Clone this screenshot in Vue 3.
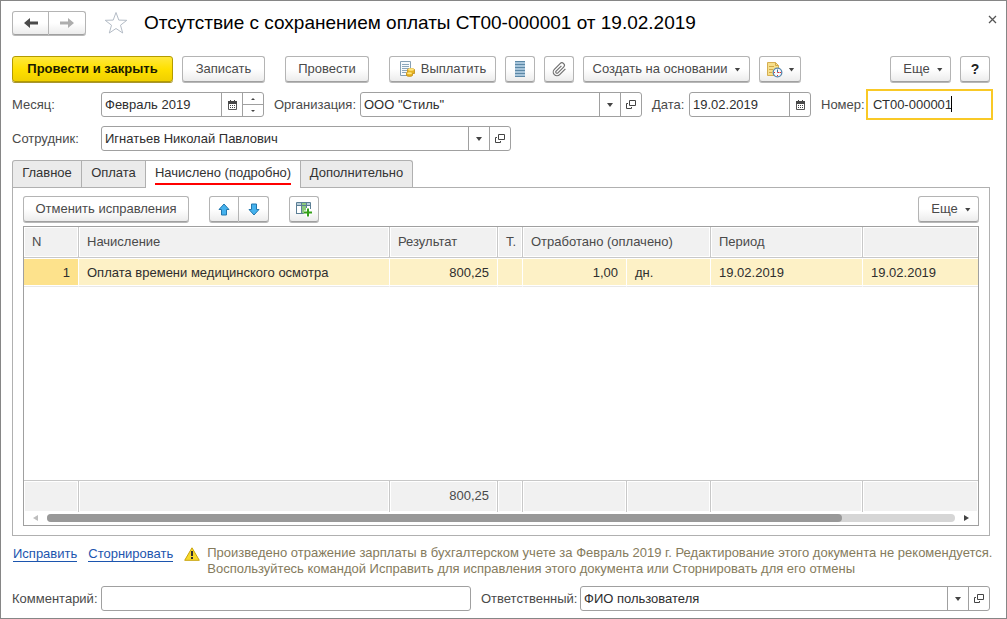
<script setup>
import { ref } from 'vue'

const month = ref('Февраль 2019')
const organization = ref('ООО "Стиль"')
const date = ref('19.02.2019')
const number = ref('СТ00-000001')
const employee = ref('Игнатьев Николай Павлович')
const comment = ref('')
const responsible = ref('ФИО пользователя')
const tabs = [
  { title: 'Главное', size: 'first' },
  { title: 'Оплата', size: 'short' },
  { title: 'Начислено (подробно)', size: 'long' },
  { title: 'Дополнительно', size: 'medium' },
]
const active = ref(2)
const rows = [
  { n: 1, name: 'Оплата времени медицинского осмотра', result: '800,25', amount: '1,00', unit: 'дн.', from: '19.02.2019', to: '19.02.2019' },
]
</script>

<template>
  <main class="window">
    <header class="titlebar">
      <div class="group nav">
        <button class="btn" type="button" aria-label="Назад">
          <svg width="16" height="12" viewBox="0 0 16 12"><path d="M1 6l6-5v3.500h8v3H7V11z" fill="#4a4a4a" /></svg>
        </button>
        <button class="btn" type="button" aria-label="Вперед">
          <svg width="16" height="12" viewBox="0 0 16 12"><path d="M15 6L9 1v3.500H1v3h8V11z" fill="#adadad" /></svg>
        </button>
      </div>
      <button class="plain star" type="button" aria-label="Избранное">
        <svg width="24" height="24" viewBox="0 0 24 24"><path d="M12 1.500l2.800 7.600 8 .2-6.300 4.900 2.200 7.800L12 17.500 5.300 22l2.200-7.800L1.200 9.300l8-.2z" fill="#fff" stroke="#b4bcc6" /></svg>
      </button>
      <h1>Отсутствие с сохранением оплаты СТ00-000001 от 19.02.2019</h1>
      <button class="plain close" type="button" aria-label="Закрыть">
        <svg width="9" height="9" viewBox="0 0 9 9"><path d="M1 1l7 7M8 1L1 8" stroke="#555" stroke-width="1.300" /></svg>
      </button>
    </header>

    <div class="toolbar">
      <button class="btn primary" type="button">Провести и закрыть</button>
      <button class="btn w-save" type="button">Записать</button>
      <button class="btn w-post apart" type="button">Провести</button>
      <button class="btn w-pay apart" type="button">
        <svg width="16" height="16" viewBox="0 0 16 16">
          <path d="M1.500.5h10v14h-10z" fill="#f7fafc" stroke="#86a0b4" />
          <path d="M3 3.500h7M3 5.500h7M3 7.500h7M3 9.500h5M3 11.500h4" stroke="#8ba6ba" />
          <path d="M8.500 8.500v3h-1v3c1 1.200 5 1.200 6 0v-2h2v-4c-1-1.200-6-1.200-7 0z" fill="#e6b422" stroke="#c08a14" stroke-width=".8" />
          <ellipse cx="12" cy="8.500" rx="3" ry="1.200" fill="#ffe680" />
          <ellipse cx="10.500" cy="12.300" rx="2.500" ry="1" fill="#ffe680" />
        </svg>
        Выплатить
      </button>
      <button class="btn square" type="button" aria-label="Список">
        <svg width="10" height="16" viewBox="0 0 10 16">
          <path d="M0 0h10v16H0z" fill="#a6c4da" />
          <path d="M0 .5h10M0 3.500h10M0 6.500h10M0 9.500h10M0 12.500h10M0 15.500h10" stroke="#5c88a6" />
        </svg>
      </button>
      <button class="btn square" type="button" aria-label="Присоединенные файлы">
        <svg width="15" height="15" viewBox="0 0 24 24"><path d="M21.440 11.050l-9.190 9.190a6 6 0 0 1-8.490-8.490l9.190-9.190a4 4 0 0 1 5.660 5.660l-9.200 9.190a2 2 0 0 1-2.830-2.830l8.490-8.480" fill="none" stroke="#707070" stroke-width="1.900" /></svg>
      </button>
      <button class="btn w-create" type="button">Создать на основании <i class="caret"></i></button>
      <button class="btn w-report" type="button" aria-label="Отчеты">
        <svg width="17" height="17" viewBox="0 0 17 17">
          <path d="M1.500 1.500h8l3 3v10h-11z" fill="#f6df8b" stroke="#d5ae52" />
          <path d="M9.500 1.500v3h3M3 5.500h5M3 8.500h4M3 11.500h3" fill="none" stroke="#d0a747" />
          <circle cx="11.500" cy="11.500" r="4.300" fill="#f4fafe" stroke="#5987ad" stroke-width="1.300" />
          <path d="M11.500 8.500v3" stroke="#346b99" />
          <path d="M8 11.500h1M14 11.500h1M11 14.500h1M11.500 11.500h2" stroke="#e03030" />
        </svg>
        <i class="caret"></i>
      </button>
      <button class="btn w-more push" type="button">Еще <i class="caret"></i></button>
      <button class="btn square help" type="button" aria-label="Справка">?</button>
    </div>

    <div class="fields">
      <label class="l-first" for="month">Месяц:</label>
      <div class="field f-month">
        <input id="month" v-model="month" />
        <button type="button" aria-label="Календарь">
          <svg width="9" height="10" viewBox="0 0 9 10"><path d="M.5 2v7.500h8V2z" fill="#fff" stroke="#555" /><path d="M0 1h9v3H0zM2 0h1v1H2zM6 0h1v1H6z" fill="#484848" /><path d="M2 5.500h5M2 7.500h5" stroke="#484848" stroke-dasharray="1 1" /></svg>
        </button>
        <span class="spin">
          <button type="button" aria-label="Больше"><svg width="4" height="2" viewBox="0 0 4 2"><path d="M0 2l2-2 2 2z" fill="#444" /></svg></button>
          <button type="button" aria-label="Меньше"><svg width="4" height="2" viewBox="0 0 4 2"><path d="M0 0l2 2 2-2z" fill="#444" /></svg></button>
        </span>
      </div>
      <label class="l-org" for="org">Организация:</label>
      <div class="field grow">
        <input id="org" v-model="organization" />
        <button type="button" aria-label="Выбрать организацию"><i class="caret"></i></button>
        <button type="button" aria-label="Открыть организацию">
          <svg width="10" height="10" viewBox="0 0 10 10"><path d="M3.500.5h6v5h-6zM2 3.500H.5v5h5V7" fill="none" stroke="#444" /></svg>
        </button>
      </div>
      <label class="l-date" for="date">Дата:</label>
      <div class="field f-date">
        <input id="date" v-model="date" />
        <button type="button" aria-label="Выбрать дату">
          <svg width="9" height="10" viewBox="0 0 9 10"><path d="M.5 2v7.500h8V2z" fill="#fff" stroke="#555" /><path d="M0 1h9v3H0zM2 0h1v1H2zM6 0h1v1H6z" fill="#484848" /><path d="M2 5.500h5M2 7.500h5" stroke="#484848" stroke-dasharray="1 1" /></svg>
        </button>
      </div>
      <label class="l-number" for="number">Номер:</label>
      <div class="field f-number">
        <input id="number" v-model="number" />
        <span class="cursor"></span>
      </div>
    </div>

    <div class="fields">
      <label class="l-first" for="employee">Сотрудник:</label>
      <div class="field f-person">
        <input id="employee" v-model="employee" />
        <button type="button" aria-label="Выбрать сотрудника"><i class="caret"></i></button>
        <button type="button" aria-label="Открыть сотрудника">
          <svg width="10" height="10" viewBox="0 0 10 10"><path d="M3.500.5h6v5h-6zM2 3.500H.5v5h5V7" fill="none" stroke="#444" /></svg>
        </button>
      </div>
    </div>

    <div class="tabs" role="tablist">
      <button
        v-for="(tab, i) in tabs"
        :key="tab.title"
        type="button"
        role="tab"
        class="tab"
        :class="[tab.size, { active: i === active }]"
        :aria-selected="i === active"
        @click="active = i"
      ><span>{{ tab.title }}</span></button>
    </div>

    <section class="panel">
      <div class="toolbar inner">
        <button class="btn w-cancel" type="button">Отменить исправления</button>
        <div class="group move apart">
          <button class="btn" type="button" aria-label="Переместить вверх">
            <svg width="12" height="13" viewBox="0 0 12 13"><path d="M6 1l5 5.500H8.500v5.500h-5V6.500H1z" fill="#45b2ee" stroke="#2377ad" /></svg>
          </button>
          <button class="btn" type="button" aria-label="Переместить вниз">
            <svg width="12" height="13" viewBox="0 0 12 13"><path d="M6 12l5-5.500H8.500V1h-5v5.500H1z" fill="#45b2ee" stroke="#2377ad" /></svg>
          </button>
        </div>
        <button class="btn square apart" type="button" aria-label="Добавить колонку">
          <svg width="17" height="15" viewBox="0 0 17 15">
            <path d="M0 0h15v12H0z" fill="#fff" />
            <path d="M5 0h5v12H5z" fill="#8cc97c" />
            <path d="M1 1h4v2H1zM10 1h4v2h-4z" fill="#b9ceda" />
            <path d="M.5 12V.5h14V7M.5 3.500h14M5.500 0v12M10.500 0v8M.5 11.500h7" fill="none" stroke="#5c7f95" />
            <path d="M12 6v9M8 10.500h8" stroke="#fff" stroke-width="4" />
            <path d="M12 6.500v8M8 10.500h8" stroke="#34a018" stroke-width="2" />
          </svg>
        </button>
        <button class="btn w-more push" type="button">Еще <i class="caret"></i></button>
      </div>

      <div class="grid">
        <table>
          <colgroup>
            <col class="c-n" /><col class="c-name" /><col class="c-result" /><col class="c-t" /><col class="c-amount" /><col class="c-unit" /><col class="c-from" /><col class="c-to" />
          </colgroup>
          <thead>
            <tr>
              <th>N</th><th>Начисление</th><th>Результат</th><th>Т.</th><th colspan="2">Отработано (оплачено)</th><th>Период</th><th></th>
            </tr>
          </thead>
          <tbody>
            <tr v-for="row in rows" :key="row.n" class="selected">
              <td class="num current">{{ row.n }}</td>
              <td>{{ row.name }}</td>
              <td class="num">{{ row.result }}</td>
              <td></td>
              <td class="num">{{ row.amount }}</td>
              <td>{{ row.unit }}</td>
              <td>{{ row.from }}</td>
              <td>{{ row.to }}</td>
            </tr>
            <tr class="rest"><td colspan="8"></td></tr>
          </tbody>
          <tfoot>
            <tr><td></td><td></td><td class="num">800,25</td><td></td><td></td><td></td><td></td><td></td></tr>
          </tfoot>
        </table>
        <div class="scroll">
          <button class="plain" type="button" aria-label="Прокрутить влево"><svg width="5" height="6" viewBox="0 0 5 6"><path d="M5 0v6L0 3z" fill="#bdbdbd" /></svg></button>
          <div class="track"><div class="thumb"></div></div>
          <button class="plain" type="button" aria-label="Прокрутить вправо"><svg width="5" height="6" viewBox="0 0 5 6"><path d="M0 0v6l5-3z" fill="#444" /></svg></button>
        </div>
      </div>
    </section>

    <div class="notice">
      <a href="#">Исправить</a>
      <a href="#">Сторнировать</a>
      <svg width="16" height="14" viewBox="0 0 16 14"><path d="M8 .8L15.300 13.300H.7z" fill="#f7d92c" stroke="#c9a40c" stroke-linejoin="round" /><path d="M8 4v5M8 10v2" stroke="#333" stroke-width="2" /></svg>
      <p>Произведено отражение зарплаты в бухгалтерском учете за Февраль 2019 г. Редактирование этого документа не рекомендуется.<br />Воспользуйтесь командой Исправить для исправления этого документа или Сторнировать для его отмены</p>
    </div>

    <div class="fields last">
      <label class="l-first" for="comment">Комментарий:</label>
      <div class="field grow"><input id="comment" v-model="comment" /></div>
      <label class="l-resp" for="responsible">Ответственный:</label>
      <div class="field f-person">
        <input id="responsible" v-model="responsible" />
        <button type="button" aria-label="Выбрать ответственного"><i class="caret"></i></button>
        <button type="button" aria-label="Открыть ответственного">
          <svg width="10" height="10" viewBox="0 0 10 10"><path d="M3.500.5h6v5h-6zM2 3.500H.5v5h5V7" fill="none" stroke="#444" /></svg>
        </button>
      </div>
    </div>
  </main>
</template>

<style>
body { margin: 0; background: #fff; }
</style>

<style scoped>
.window, .window * { box-sizing: border-box; }
.window {
  display: flex;
  flex-direction: column;
  min-height: 100vh;
  padding: 9px 16px 7px 11px;
  border: 1px solid #868686;
  background: #fff;
  color: #4a4a4a;
  font: 13px/16px "Liberation Sans", Arial, sans-serif;
}
button, input { font: inherit; color: inherit; margin: 0; }
svg { flex: none; display: block; }
.plain { display: flex; align-items: center; justify-content: center; padding: 0; border: 0; background: none; }

.titlebar { display: flex; align-items: center; height: 25px; margin-bottom: 21px; }
.star { margin: 0 16px 0 18px; }
h1 { flex: 1; margin: 0; color: #000; font-size: 19px; font-weight: 400; line-height: 24px; white-space: nowrap; }
.close { position: absolute; top: 15px; right: 10px; }

.btn {
  display: flex;
  align-items: center;
  justify-content: center;
  height: 26px;
  padding: 0;
  border: 1px solid #b4b4b4;
  border-bottom-color: #a0a0a0;
  border-radius: 3px;
  background: linear-gradient(#fff 50%, #ececec);
  box-shadow: 0 1px 0 #b8b8b8;
  white-space: nowrap;
}
.group { display: flex; }
.group .btn:first-child { border-radius: 3px 0 0 3px; }
.group .btn:last-child { border-left: 0; border-radius: 0 3px 3px 0; }
.nav .btn { width: 37px; height: 24px; }
.move .btn { width: 30px; }

.toolbar { display: flex; gap: 9px; height: 27px; margin-bottom: 9px; }
.apart { margin-left: 11px; }
.push { margin-left: auto; }
.primary {
  width: 161px;
  border-color: #b39b00;
  background: linear-gradient(#ffe83d, #ffe000 50%, #f0d000);
  box-shadow: 0 1px 0 #a89530;
  color: #1a1a00;
  font-weight: 700;
}
.w-save { width: 83px; }
.w-post { width: 84px; }
.w-pay { width: 107px; gap: 6px; }
.w-create { width: 167px; gap: 7px; }
.w-report { width: 42px; gap: 6px; }
.w-more { width: 61px; gap: 7px; padding-left: 5px; }
.w-cancel { width: 166px; }
.square { width: 30px; }
.help { color: #222; font-size: 14px; font-weight: 700; }
.caret { flex: none; width: 6px; height: 4px; margin-top: 1px; background: #444; clip-path: polygon(0 0, 100% 0, 50% 100%); }

.fields { display: flex; height: 25px; margin-bottom: 9px; }
.fields.last { margin-bottom: 0; }
.fields label { flex: none; line-height: 26px; white-space: nowrap; }
.l-first { width: 89px; }
.l-org { width: 96px; padding-left: 10px; }
.l-date { width: 47px; padding-left: 10px; }
.l-number { width: 57px; padding-left: 10px; }
.l-resp { width: 109px; padding-left: 10px; }
.field { display: flex; flex: none; border: 1px solid #a0a0a0; border-radius: 3px; background: #fff; color: #2e2e2e; }
.field.grow { flex: 1; min-width: 0; }
.field input { flex: 1; width: 0; min-width: 0; padding: 0 3px; border: 0; outline: 0; background: none; }
.field button { display: flex; align-items: center; justify-content: center; width: 21px; padding: 0; border: 0; border-left: 1px solid #a0a0a0; background: none; }
.field .spin { display: flex; flex-direction: column; width: 21px; border-left: 1px solid #a0a0a0; }
.field .spin button { flex: 1; width: 20px; border: 0; }
.field .spin button + button { border-top: 1px solid #a0a0a0; }
.f-month { width: 163px; }
.f-date { width: 122px; }
.f-person { width: 410px; }
.f-number { position: relative; width: 123px; margin: -1px -1px -1px 0; border-color: #fff; border-radius: 0; box-shadow: 0 0 0 2px #f9c926; }
.f-number input { padding: 0 4px; }
.cursor { position: absolute; top: 4px; left: 82px; width: 1px; height: 16px; background: #000; }

.tabs { display: flex; }
.tab { display: flex; justify-content: center; height: 27px; padding: 0; border: 1px solid #b0b0b0; border-bottom: 0; border-left: 0; background: #ebebeb; color: #333; }
.tab:first-child { border-left: 1px solid #b0b0b0; border-radius: 3px 0 0 0; }
.tab:last-child { border-radius: 0 3px 0 0; }
.tab.first { width: 70px; }
.tab.short { width: 64px; }
.tab.long { width: 155px; }
.tab.medium { width: 112px; }
.tab span { height: 24px; line-height: 24px; white-space: nowrap; }
.tab.active { height: 28px; margin-bottom: -1px; background: #fff; z-index: 1; }
.tab.active span { border-bottom: 2px solid #f00; }

.panel { display: flex; flex: 1; flex-direction: column; padding: 8px 10px 9px; border: 1px solid #b0b0b0; }
.toolbar.inner { margin-bottom: 3px; }
.grid { display: flex; flex: 1; flex-direction: column; border: 1px solid #a0a0a0; }
table { flex: 1; width: 100%; border-spacing: 0; table-layout: fixed; }
.c-n { width: 55px; }
.c-name { width: 311px; }
.c-result { width: 108px; }
.c-t { width: 25px; }
.c-amount { width: 104px; }
.c-unit { width: 84px; }
.c-from { width: 152px; }
th, td { padding: 0 8px; font-weight: 400; text-align: left; white-space: nowrap; }
th { height: 31px; border-right: 1px solid #c8c8c8; border-bottom: 1px solid #c8c8c8; background: #f1f1f1; box-shadow: inset 0 0 0 1px #fff; }
.selected td { height: 29px; padding-top: 1px; border-right: 1px solid #fff; border-bottom: 1px solid #e8e8e8; background: #fdf1c6; box-shadow: inset 0 1px #fff, inset 0 -1px #fff; color: #2e2e2e; }
.selected .current { background: #fde28c; }
.rest td { height: auto; }
tfoot td { height: 32px; padding-bottom: 2px; border-top: 1px solid #c8c8c8; border-right: 1px solid #c8c8c8; background: #f1f1f1; box-shadow: inset 0 0 0 1px #fff; }
tr > :last-child { border-right: 0; }
.num { text-align: right; }
.scroll { display: flex; align-items: center; height: 13px; padding-bottom: 2px; }
.scroll button { width: 23px; height: 11px; }
.track { flex: 1; height: 8px; border-radius: 4px; background: #d6d6d6; }
.thumb { width: 87.5%; height: 8px; border-radius: 4px; background: #999; }

.notice { display: flex; align-items: flex-start; margin: 9px -12px 9px 1px; }
.notice a { margin: 1px 11px 0 0; border-bottom: 1px solid #1c55ae; color: #1c55ae; line-height: 15px; text-decoration: none; }
.notice svg { margin: 2px 7px 0 0; }
.notice p { flex: 1; margin: 0; color: #857b5c; white-space: nowrap; }
</style>
